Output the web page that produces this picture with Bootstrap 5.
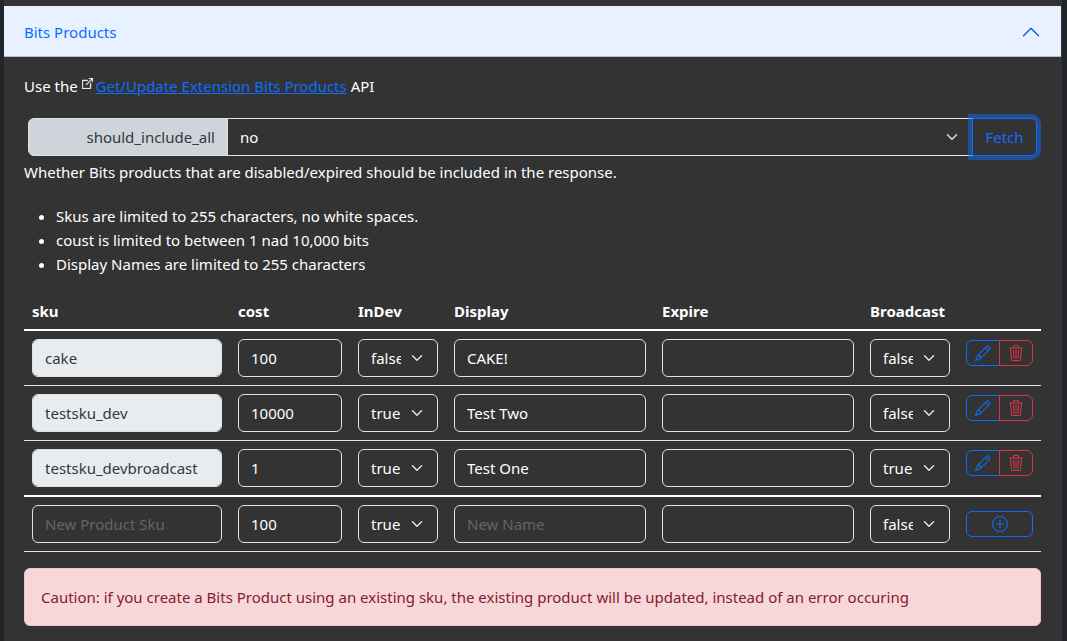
<!doctype html>
<html lang="en">
<head>
<meta charset="utf-8">
<title>Bits Products</title>
<link href="https://cdn.jsdelivr.net/npm/bootstrap@5.3.0/dist/css/bootstrap.min.css" rel="stylesheet">
<style>
:root{--bs-border-radius:.25rem}
html,body{height:641px;overflow:hidden}
body{background:#212529;color:#fff;font-family:"Noto Sans",sans-serif;font-size:15px;line-height:24px}
.page-wrap{background:#333;padding:6px 1px 0 0;height:641px;width:1058px;margin-left:4px}
.bits-acc .accordion-item,.bits-acc .accordion-item:first-of-type{background:#333;border:0;border-radius:0;color:#fff}
.bits-acc .accordion-item:first-of-type .accordion-button{background:#e7f1ff;color:#0d6efd;padding:0 20px;height:51px;font-size:15px;border-radius:0;box-shadow:inset 0 -1px 0 #bbb}
.bits-acc .accordion-body{padding:17px 20px 0}
.bits-acc a{color:#0d6efd}
.ext-icon{width:11px;height:11px;vertical-align:3px;margin:0 3px 0 0;stroke:currentColor;stroke-width:.7}
.fetch-group{margin:20px 4px 0;width:auto}
.fetch-group .input-group-text{width:200px;justify-content:flex-end;background:#ced4da;color:#33383e;font-size:15px;line-height:24px;border-color:#dee2e6}
.dark-field{background-color:#333;color:#fff;border-color:#dee2e6;font-size:15px;line-height:24px}
.dark-field:disabled{background-color:#e9ecef;color:#33383e;opacity:1}
.dark-field::placeholder{color:#5f666d;opacity:1}
.dark-select{background-image:url("data:image/svg+xml,%3csvg xmlns='http://www.w3.org/2000/svg' viewBox='0 0 16 16'%3e%3cpath fill='none' stroke='%23dee2e6' stroke-linecap='round' stroke-linejoin='round' stroke-width='2' d='m2 5 6 6 6-6'/%3e%3c/svg%3e")}
.fetch-btn{position:relative;z-index:5;width:65px;padding:0;font-size:15px;color:#0d6efd;border-color:#0d6efd;box-shadow:0 0 0 4px rgba(13,110,253,.5)}
.field-help{margin-top:4px;margin-bottom:20px}
.rules-list{margin-bottom:15px;padding-left:32px}
.prod-table{table-layout:fixed;width:1017px;margin-bottom:16px;--bs-table-color:#fff;--bs-table-bg:transparent;--bs-table-border-color:#dee2e6}
.prod-table th{font-weight:700;padding:8px 8px 6px;line-height:24px;border-bottom:2px solid #fff}
.prod-table td{padding:8px;height:55px}
.prod-table tbody tr:nth-child(3) td{border-bottom:2px solid #fff}
.prod-table tbody tr:nth-child(4) td{vertical-align:middle}
.w-sku{width:206px}.w-cost{width:120px}.w-dev{width:96px}.w-name{width:208px}.w-act{width:83px}
.btn-ico{display:block;width:16px;height:16px}
.act-group .btn{padding:4px 8px;line-height:16px}
.add-btn{padding:4px 8px;line-height:16px}
.add-btn svg{margin:0 auto}
.caution{margin:0;padding:16px;height:58px;font-size:15px;line-height:24px;background:#f8d7da;color:#842029;border-color:#f5c2c7}
</style>
</head>
<body>
<div class="page-wrap">
<div class="accordion bits-acc">
 <div class="accordion-item">
  <h2 class="accordion-header"><button class="accordion-button" type="button">Bits Products</button></h2>
  <div class="accordion-collapse collapse show">
   <div class="accordion-body">
    <div>Use the <svg class="ext-icon" viewBox="0 0 16 16" fill="currentColor"><path fill-rule="evenodd" d="M8.636 3.5a.5.5 0 0 0-.5-.5H1.5A1.5 1.5 0 0 0 0 4.5v10A1.5 1.5 0 0 0 1.5 16h10a1.5 1.5 0 0 0 1.5-1.5V7.864a.5.5 0 0 0-1 0V14.5a.5.5 0 0 1-.5.5h-10a.5.5 0 0 1-.5-.5v-10a.5.5 0 0 1 .5-.5h6.636a.5.5 0 0 0 .5-.5z"/><path fill-rule="evenodd" d="M16 .5a.5.5 0 0 0-.5-.5h-5a.5.5 0 0 0 0 1h3.793L6.146 9.146a.5.5 0 1 0 .708.708L15 1.707V5.5a.5.5 0 0 0 1 0v-5z"/></svg><a href="#">Get/Update Extension Bits Products</a> API</div>
    <div class="input-group fetch-group">
     <span class="input-group-text">should_include_all</span>
     <select class="form-select dark-field dark-select"><option>no</option></select>
     <button class="btn btn-outline-primary fetch-btn" type="button">Fetch</button>
    </div>
    <div class="field-help">Whether Bits products that are disabled/expired should be included in the response.</div>
    <ul class="rules-list">
     <li>Skus are limited to 255 characters, no white spaces.</li>
     <li>coust is limited to between 1 nad 10,000 bits</li>
     <li>Display Names are limited to 255 characters</li>
    </ul>
    <table class="table prod-table">
     <colgroup><col class="w-sku"><col class="w-cost"><col class="w-dev"><col class="w-name"><col class="w-name"><col class="w-dev"><col class="w-act"></colgroup>
     <thead><tr><th>sku</th><th>cost</th><th>InDev</th><th>Display</th><th>Expire</th><th>Broadcast</th><th></th></tr></thead>
     <tbody>
      <tr>
       <td><input class="form-control dark-field" value="cake" disabled></td>
       <td><input class="form-control dark-field" value="100"></td>
       <td><select class="form-select dark-field dark-select"><option>false</option></select></td>
       <td><input class="form-control dark-field" value="CAKE!"></td>
       <td><input class="form-control dark-field"></td>
       <td><select class="form-select dark-field dark-select"><option>false</option></select></td>
       <td><div class="btn-group act-group"><button class="btn btn-outline-primary" type="button" aria-label="Edit"><svg class="btn-ico" viewBox="0 0 16 16" fill="currentColor"><path d="M12.146.146a.5.5 0 0 1 .708 0l3 3a.5.5 0 0 1 0 .708l-10 10a.5.5 0 0 1-.168.11l-5 2a.5.5 0 0 1-.65-.65l2-5a.5.5 0 0 1 .11-.168l10-10zM11.207 2.5 13.5 4.793 14.793 3.5 12.5 1.207 11.207 2.5zm1.586 3L10.5 3.207 4 9.707V10h.5a.5.5 0 0 1 .5.5v.5h.5a.5.5 0 0 1 .5.5v.5h.293l6.5-6.5zm-9.761 5.175-.106.106-1.528 3.821 3.821-1.528.106-.106A.5.5 0 0 1 5 12.5V12h-.5a.5.5 0 0 1-.5-.5V11h-.5a.5.5 0 0 1-.468-.325z"/></svg></button><button class="btn btn-outline-danger" type="button" aria-label="Delete"><svg class="btn-ico" viewBox="0 0 16 16" fill="currentColor"><path d="M6.5 1h3a.5.5 0 0 1 .5.5v1H6v-1a.5.5 0 0 1 .5-.5ZM11 2.5v-1A1.5 1.5 0 0 0 9.5 0h-3A1.5 1.5 0 0 0 5 1.5v1H2.506a.58.58 0 0 0-.01 0H1.5a.5.5 0 0 0 0 1h.538l.853 10.66A2 2 0 0 0 4.885 16h6.23a2 2 0 0 0 1.994-1.84l.853-10.66h.538a.5.5 0 0 0 0-1h-.997a.58.58 0 0 0-.01 0H11Zm1.958 1-.846 10.58a1 1 0 0 1-.997.92h-6.23a1 1 0 0 1-.997-.92L3.042 3.5h9.916Zm-7.487 1a.5.5 0 0 1 .528.47l.5 8.5a.5.5 0 0 1-.998.06L5 5.03a.5.5 0 0 1 .47-.53Zm5.058 0a.5.5 0 0 1 .47.53l-.5 8.5a.5.5 0 1 1-.998-.06l.5-8.5a.5.5 0 0 1 .528-.47ZM8 4.5a.5.5 0 0 1 .5.5v8.5a.5.5 0 0 1-1 0V5a.5.5 0 0 1 .5-.5Z"/></svg></button></div></td>
      </tr>
      <tr>
       <td><input class="form-control dark-field" value="testsku_dev" disabled></td>
       <td><input class="form-control dark-field" value="10000"></td>
       <td><select class="form-select dark-field dark-select"><option>true</option></select></td>
       <td><input class="form-control dark-field" value="Test Two"></td>
       <td><input class="form-control dark-field"></td>
       <td><select class="form-select dark-field dark-select"><option>false</option></select></td>
       <td><div class="btn-group act-group"><button class="btn btn-outline-primary" type="button" aria-label="Edit"><svg class="btn-ico" viewBox="0 0 16 16" fill="currentColor"><path d="M12.146.146a.5.5 0 0 1 .708 0l3 3a.5.5 0 0 1 0 .708l-10 10a.5.5 0 0 1-.168.11l-5 2a.5.5 0 0 1-.65-.65l2-5a.5.5 0 0 1 .11-.168l10-10zM11.207 2.5 13.5 4.793 14.793 3.5 12.5 1.207 11.207 2.5zm1.586 3L10.5 3.207 4 9.707V10h.5a.5.5 0 0 1 .5.5v.5h.5a.5.5 0 0 1 .5.5v.5h.293l6.5-6.5zm-9.761 5.175-.106.106-1.528 3.821 3.821-1.528.106-.106A.5.5 0 0 1 5 12.5V12h-.5a.5.5 0 0 1-.5-.5V11h-.5a.5.5 0 0 1-.468-.325z"/></svg></button><button class="btn btn-outline-danger" type="button" aria-label="Delete"><svg class="btn-ico" viewBox="0 0 16 16" fill="currentColor"><path d="M6.5 1h3a.5.5 0 0 1 .5.5v1H6v-1a.5.5 0 0 1 .5-.5ZM11 2.5v-1A1.5 1.5 0 0 0 9.5 0h-3A1.5 1.5 0 0 0 5 1.5v1H2.506a.58.58 0 0 0-.01 0H1.5a.5.5 0 0 0 0 1h.538l.853 10.66A2 2 0 0 0 4.885 16h6.23a2 2 0 0 0 1.994-1.84l.853-10.66h.538a.5.5 0 0 0 0-1h-.997a.58.58 0 0 0-.01 0H11Zm1.958 1-.846 10.58a1 1 0 0 1-.997.92h-6.23a1 1 0 0 1-.997-.92L3.042 3.5h9.916Zm-7.487 1a.5.5 0 0 1 .528.47l.5 8.5a.5.5 0 0 1-.998.06L5 5.03a.5.5 0 0 1 .47-.53Zm5.058 0a.5.5 0 0 1 .47.53l-.5 8.5a.5.5 0 1 1-.998-.06l.5-8.5a.5.5 0 0 1 .528-.47ZM8 4.5a.5.5 0 0 1 .5.5v8.5a.5.5 0 0 1-1 0V5a.5.5 0 0 1 .5-.5Z"/></svg></button></div></td>
      </tr>
      <tr>
       <td><input class="form-control dark-field" value="testsku_devbroadcast" disabled></td>
       <td><input class="form-control dark-field" value="1"></td>
       <td><select class="form-select dark-field dark-select"><option>true</option></select></td>
       <td><input class="form-control dark-field" value="Test One"></td>
       <td><input class="form-control dark-field"></td>
       <td><select class="form-select dark-field dark-select"><option>true</option></select></td>
       <td><div class="btn-group act-group"><button class="btn btn-outline-primary" type="button" aria-label="Edit"><svg class="btn-ico" viewBox="0 0 16 16" fill="currentColor"><path d="M12.146.146a.5.5 0 0 1 .708 0l3 3a.5.5 0 0 1 0 .708l-10 10a.5.5 0 0 1-.168.11l-5 2a.5.5 0 0 1-.65-.65l2-5a.5.5 0 0 1 .11-.168l10-10zM11.207 2.5 13.5 4.793 14.793 3.5 12.5 1.207 11.207 2.5zm1.586 3L10.5 3.207 4 9.707V10h.5a.5.5 0 0 1 .5.5v.5h.5a.5.5 0 0 1 .5.5v.5h.293l6.5-6.5zm-9.761 5.175-.106.106-1.528 3.821 3.821-1.528.106-.106A.5.5 0 0 1 5 12.5V12h-.5a.5.5 0 0 1-.5-.5V11h-.5a.5.5 0 0 1-.468-.325z"/></svg></button><button class="btn btn-outline-danger" type="button" aria-label="Delete"><svg class="btn-ico" viewBox="0 0 16 16" fill="currentColor"><path d="M6.5 1h3a.5.5 0 0 1 .5.5v1H6v-1a.5.5 0 0 1 .5-.5ZM11 2.5v-1A1.5 1.5 0 0 0 9.5 0h-3A1.5 1.5 0 0 0 5 1.5v1H2.506a.58.58 0 0 0-.01 0H1.5a.5.5 0 0 0 0 1h.538l.853 10.66A2 2 0 0 0 4.885 16h6.23a2 2 0 0 0 1.994-1.84l.853-10.66h.538a.5.5 0 0 0 0-1h-.997a.58.58 0 0 0-.01 0H11Zm1.958 1-.846 10.58a1 1 0 0 1-.997.92h-6.23a1 1 0 0 1-.997-.92L3.042 3.5h9.916Zm-7.487 1a.5.5 0 0 1 .528.47l.5 8.5a.5.5 0 0 1-.998.06L5 5.03a.5.5 0 0 1 .47-.53Zm5.058 0a.5.5 0 0 1 .47.53l-.5 8.5a.5.5 0 1 1-.998-.06l.5-8.5a.5.5 0 0 1 .528-.47ZM8 4.5a.5.5 0 0 1 .5.5v8.5a.5.5 0 0 1-1 0V5a.5.5 0 0 1 .5-.5Z"/></svg></button></div></td>
      </tr>
      <tr>
       <td><input class="form-control dark-field" placeholder="New Product Sku"></td>
       <td><input class="form-control dark-field" value="100"></td>
       <td><select class="form-select dark-field dark-select"><option>true</option></select></td>
       <td><input class="form-control dark-field" placeholder="New Name"></td>
       <td><input class="form-control dark-field"></td>
       <td><select class="form-select dark-field dark-select"><option>false</option></select></td>
       <td><button class="btn btn-outline-primary add-btn w-100" type="button" aria-label="Add"><svg class="btn-ico" viewBox="0 0 16 16" fill="currentColor"><path d="M8 15A7 7 0 1 1 8 1a7 7 0 0 1 0 14zm0 1A8 8 0 1 0 8 0a8 8 0 0 0 0 16z"/><path d="M8 4a.5.5 0 0 1 .5.5v3h3a.5.5 0 0 1 0 1h-3v3a.5.5 0 0 1-1 0v-3h-3a.5.5 0 0 1 0-1h3v-3A.5.5 0 0 1 8 4z"/></svg></button></td>
      </tr>
     </tbody>
    </table>
    <div class="alert alert-danger caution" role="alert">Caution: if you create a Bits Product using an existing sku, the existing product will be updated, instead of an error occuring</div>
   </div>
  </div>
 </div>
</div>
</div>
<script src="https://cdn.jsdelivr.net/npm/bootstrap@5.3.0/dist/js/bootstrap.bundle.min.js"></script>
</body>
</html>
